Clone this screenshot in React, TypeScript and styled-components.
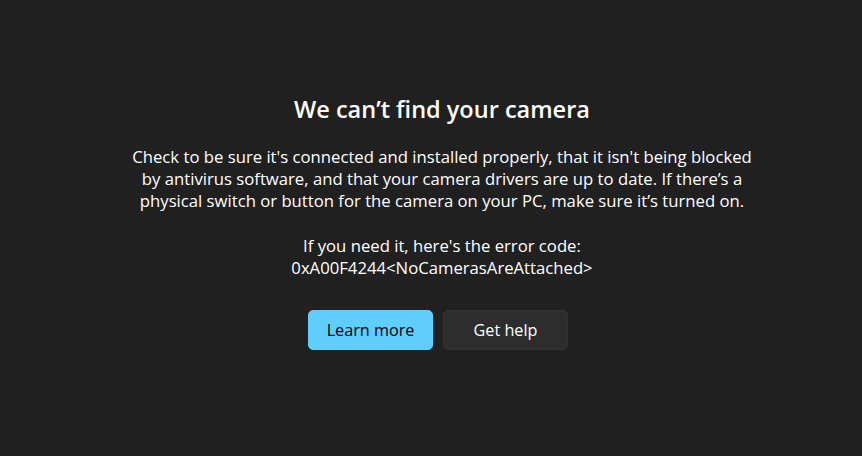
import React from "react";
import styled, { createGlobalStyle } from "styled-components";

const Global = createGlobalStyle`
  html, body { margin: 0; padding: 0; background: #202020; }
  body { font-family: "Open Sans", "Noto Sans", sans-serif; color: #ffffff; }
`;

const Page = styled.div`
  width: 862px;
  height: 456px;
  background: #202020;
  display: flex;
  flex-direction: column;
  align-items: center;
  box-sizing: border-box;
  padding: 93px 0 0 22px;
`;

const Title = styled.h1`
  margin: 0;
  font-size: 23.5px;
  font-weight: 600;
  line-height: 32px;
`;

const Body = styled.p<{ $gap: number }>`
  margin: ${(p) => p.$gap}px 0 0;
  font-size: 16.7px;
  line-height: 22px;
  text-align: center;
  white-space: nowrap;
`;

const Buttons = styled.div`
  display: flex;
  gap: 10px;
  margin: 31px 8px 0 0;
`;

const Button = styled.button<{ $primary?: boolean }>`
  width: 125px;
  height: 40px;
  border-radius: 5px;
  font-family: inherit;
  font-size: 16.2px;
  cursor: pointer;
  padding: 0;
  background: ${(p) => (p.$primary ? "#60cdff" : "#2d2d2d")};
  color: ${(p) => (p.$primary ? "#000000" : "#ffffff")};
  border: 1px solid ${(p) => (p.$primary ? "#60cdff" : "#333333")};
`;

export default function App() {
  return (
    <>
      <Global />
      <Page>
        <Title>We can’t find your camera</Title>
        <Body $gap={21}>
          Check to be sure it's connected and installed properly, that it isn't being blocked
          <br />
          by antivirus software, and that your camera drivers are up to date. If there’s a
          <br />
          physical switch or button for the camera on your PC, make sure it’s turned on.
        </Body>
        <Body $gap={23}>
          If you need it, here's the error code:
          <br />
          0xA00F4244&lt;NoCamerasAreAttached&gt;
        </Body>
        <Buttons>
          <Button $primary>Learn more</Button>
          <Button>Get help</Button>
        </Buttons>
      </Page>
    </>
  );
}
